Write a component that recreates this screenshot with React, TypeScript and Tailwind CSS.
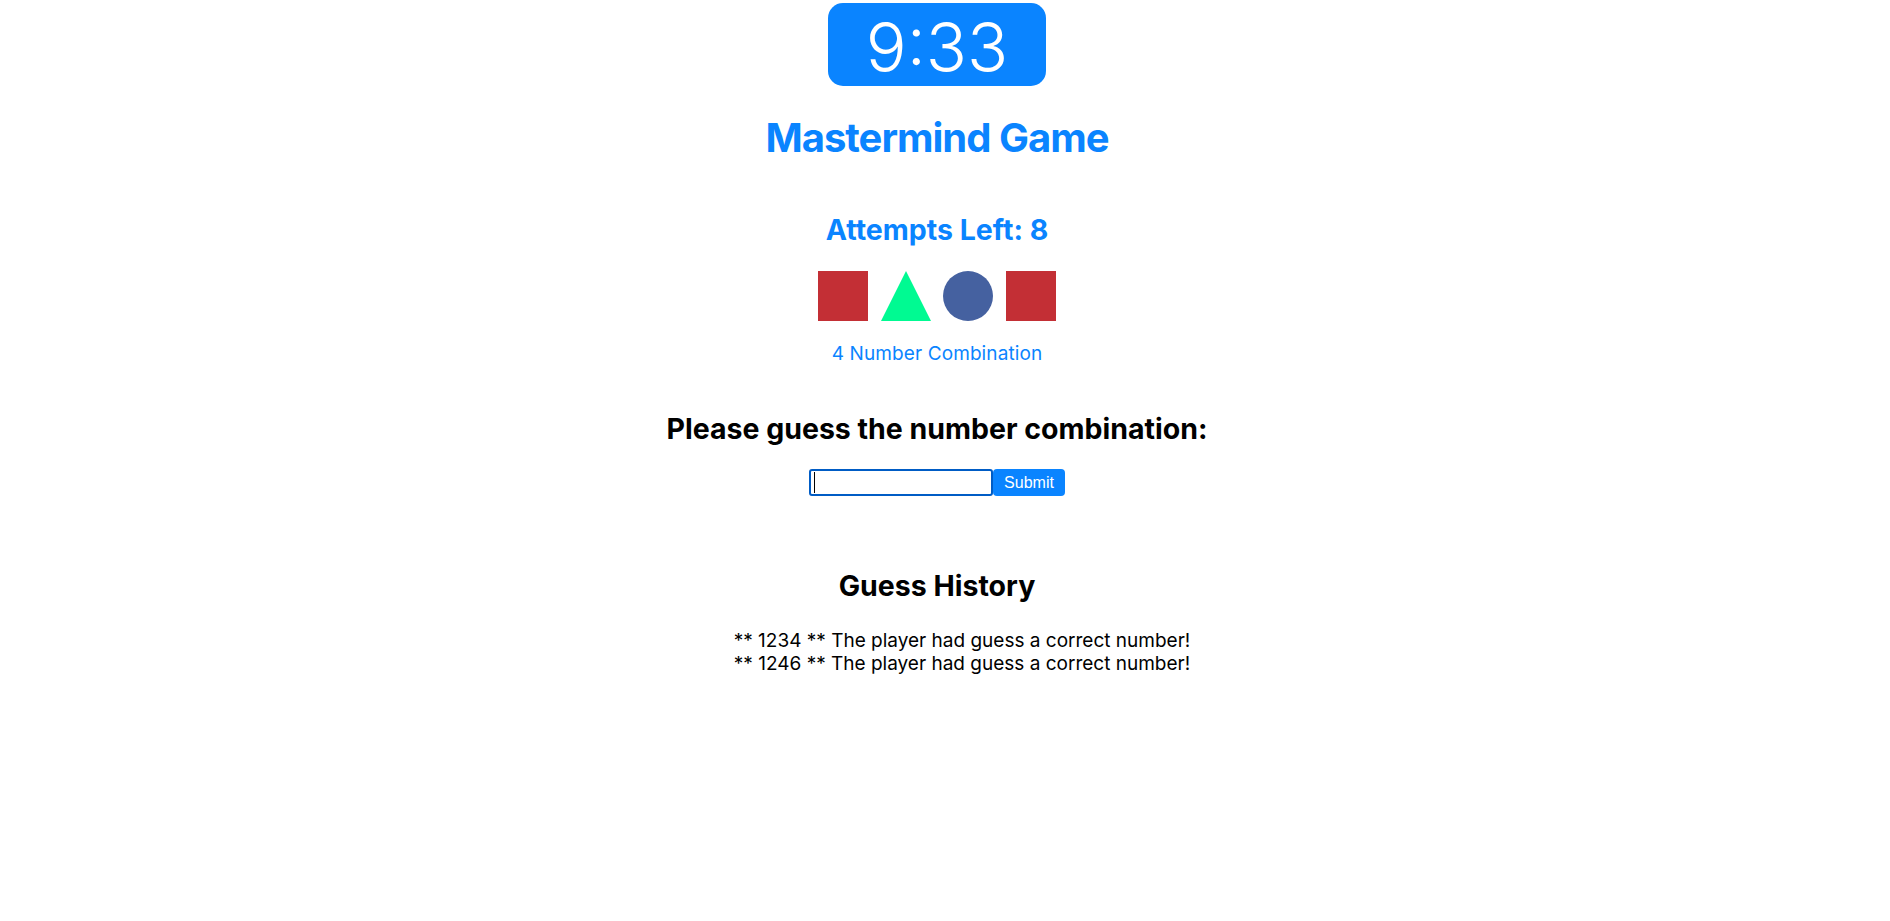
import React from "react";

export default function App() {
  return (
    <div className="min-h-screen bg-white pr-4 font-['Inter',_'Noto_Sans',_sans-serif]">
      <div className="flex flex-col items-center">
        <div className="mt-[3px] flex h-[83px] w-[218px] items-center justify-center rounded-[15px] bg-[#0a84ff] pt-[5px] text-[68px] font-light leading-none text-white">
          9:33
        </div>
        <h1 className="mt-[31.5px] text-[40px] font-bold leading-none tracking-[-1px] text-[#0a84ff]">
          Mastermind Game
        </h1>
        <h2 className="mt-[58.6px] text-[28.5px] font-bold leading-none text-[#0a84ff]">
          Attempts Left: 8
        </h2>
        <div className="mt-[26.4px] flex items-center gap-[12.5px]">
          <div className="h-[50px] w-[50px] bg-[#c32f35]" />
          <svg width="50" height="50" viewBox="0 0 50 50">
            <polygon points="25,0 50,50 0,50" fill="#00fa92" />
          </svg>
          <div className="h-[50px] w-[50px] rounded-full bg-[#4561a0]" />
          <div className="h-[50px] w-[50px] bg-[#c32f35]" />
        </div>
        <p className="mt-[23.4px] text-[19px] leading-none tracking-[0.1px] text-[#0a84ff]">
          4 Number Combination
        </p>
        <h3 className="mt-[52px] text-[28.5px] font-bold leading-none text-black">
          Please guess the number combination:
        </h3>
        <div className="mt-[25px] flex items-center">
          <div className="relative">
            <input
              type="text"
              className="block h-[27px] w-[184px] rounded-[3px] border-2 border-[#005cc5] bg-white px-[3px] outline-none"
            />
            <span className="pointer-events-none absolute left-[5px] top-[3px] h-[21px] w-px bg-black" />
          </div>
          <button className="h-[27px] w-[72px] rounded-[4px] bg-[#0a84ff] pt-px font-['Liberation_Sans',_Arial,_sans-serif] text-[16px] leading-none text-white">
            Submit
          </button>
        </div>
        <h3 className="mt-[76px] text-[28.5px] font-bold leading-none text-black">
          Guess History
        </h3>
        <ul className="mt-[29px] pl-[50px] text-center text-[19px] leading-[23px] text-black">
          <li>** 1234 ** The player had guess a correct number!</li>
          <li>** 1246 ** The player had guess a correct number!</li>
        </ul>
      </div>
    </div>
  );
}
